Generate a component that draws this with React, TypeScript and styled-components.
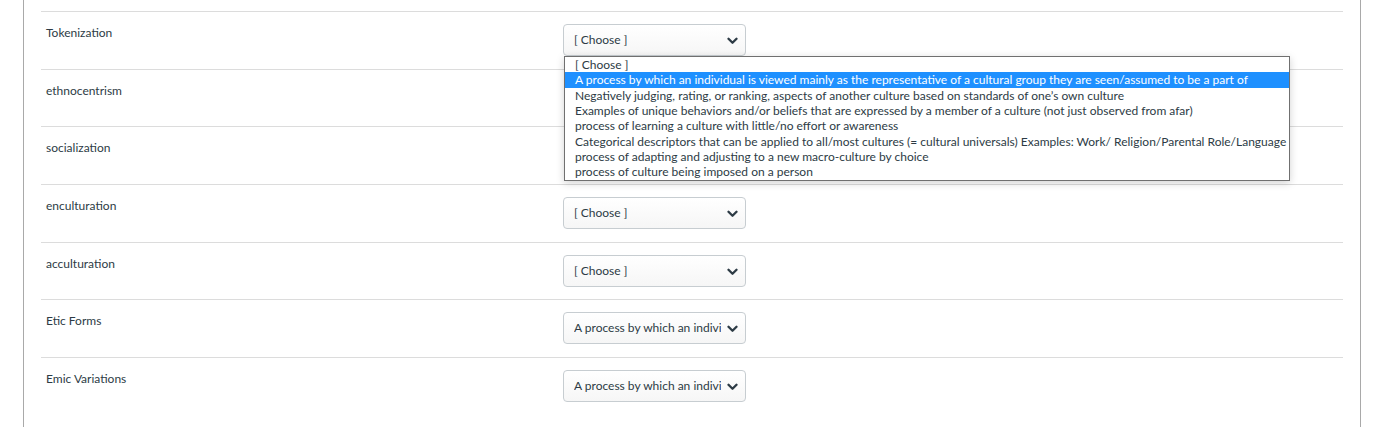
import React from "react";
import styled, { createGlobalStyle } from "styled-components";

const Global = createGlobalStyle`
  html, body { margin: 0; padding: 0; background: #ffffff; }
  body { font-family: Lato, "Noto Sans", "Liberation Sans", sans-serif; color: #2d3b45; }
  * { box-sizing: border-box; }
`;

const Page = styled.div`
  margin-left: 23px;
  width: 1338px;
  height: 427px;
  border-left: 1px solid #a9a9a9;
  border-right: 1px solid #a9a9a9;
  padding: 11px 17px 0 17px;
  overflow: hidden;
`;

const Row = styled.div`
  display: flex;
  align-items: flex-start;
  height: 57.67px;
  border-top: 1px solid #dcdcdc;
`;

const Label = styled.div`
  width: 522px;
  padding: 13px 0 0 5px;
  font-size: 12px;
  line-height: 16px;
  color: #2d3b45;
`;

const SelectWrap = styled.div`
  position: relative;
  margin-top: 12px;
`;

const SelectBox = styled.div`
  width: 183px;
  height: 32px;
  border: 1px solid #c7cdd1;
  border-radius: 4px;
  background: linear-gradient(#ffffff, #f6f6f6);
  display: flex;
  align-items: center;
  padding: 0 0 1px 10px;
  position: relative;
  font-size: 12px;
  color: #2d3b45;
`;

const Value = styled.span`
  display: block;
  width: 147px;
  overflow: hidden;
  white-space: nowrap;
`;

const Chevron = styled.svg`
  position: absolute;
  right: 7px;
  top: 12px;
  width: 11px;
  height: 8px;
`;

const List = styled.div`
  position: absolute;
  top: 32px;
  left: 1px;
  z-index: 5;
  width: 726px;
  background: #ffffff;
  border: 1px solid #707070;
  box-shadow: 0 2px 8px rgba(0, 0, 0, 0.18);
`;

const Option = styled.div<{ $active?: boolean }>`
  height: 15.33px;
  line-height: 15.33px;
  padding-left: 10px;
  font-size: 12px;
  white-space: nowrap;
  color: ${(p) => (p.$active ? "#ffffff" : "#2d3b45")};
  background: ${(p) => (p.$active ? "#1e90ff" : "transparent")};
`;

const options = [
  "[ Choose ]",
  "A process by which an individual is viewed mainly as the representative of a cultural group they are seen/assumed to be a part of",
  "Negatively judging, rating, or ranking, aspects of another culture based on standards of one\u2019s own culture",
  "Examples of unique behaviors and/or beliefs that are expressed by a member of a culture (not just observed from afar)",
  "process of learning a culture with little/no effort or awareness",
  "Categorical descriptors that can be applied to all/most cultures (= cultural universals) Examples: Work/ Religion/Parental Role/Language",
  "process of adapting and adjusting to a new macro-culture by choice",
  "process of culture being imposed on a person",
];

const rows: { label: string; value: string | null; open?: boolean }[] = [
  { label: "Tokenization", value: "[ Choose ]", open: true },
  { label: "ethnocentrism", value: null },
  { label: "socialization", value: null },
  { label: "enculturation", value: "[ Choose ]" },
  { label: "acculturation", value: "[ Choose ]" },
  { label: "Etic Forms", value: options[1] },
  { label: "Emic Variations", value: options[1] },
];

const ChevronIcon = () => (
  <Chevron viewBox="0 0 11 8">
    <polyline
      points="1.5,1.8 5.5,5.8 9.5,1.8"
      fill="none"
      stroke="#2d3b45"
      strokeWidth="2.3"
      strokeLinecap="round"
      strokeLinejoin="round"
    />
  </Chevron>
);

export default function App() {
  return (
    <>
      <Global />
      <Page>
        {rows.map((r) => (
          <Row key={r.label}>
            <Label>{r.label}</Label>
            {r.value !== null && (
              <SelectWrap>
                <SelectBox>
                  <Value>{r.value}</Value>
                  <ChevronIcon />
                </SelectBox>
                {r.open && (
                  <List>
                    {options.map((o, i) => (
                      <Option key={i} $active={i === 1}>
                        {o}
                      </Option>
                    ))}
                  </List>
                )}
              </SelectWrap>
            )}
          </Row>
        ))}
      </Page>
    </>
  );
}
